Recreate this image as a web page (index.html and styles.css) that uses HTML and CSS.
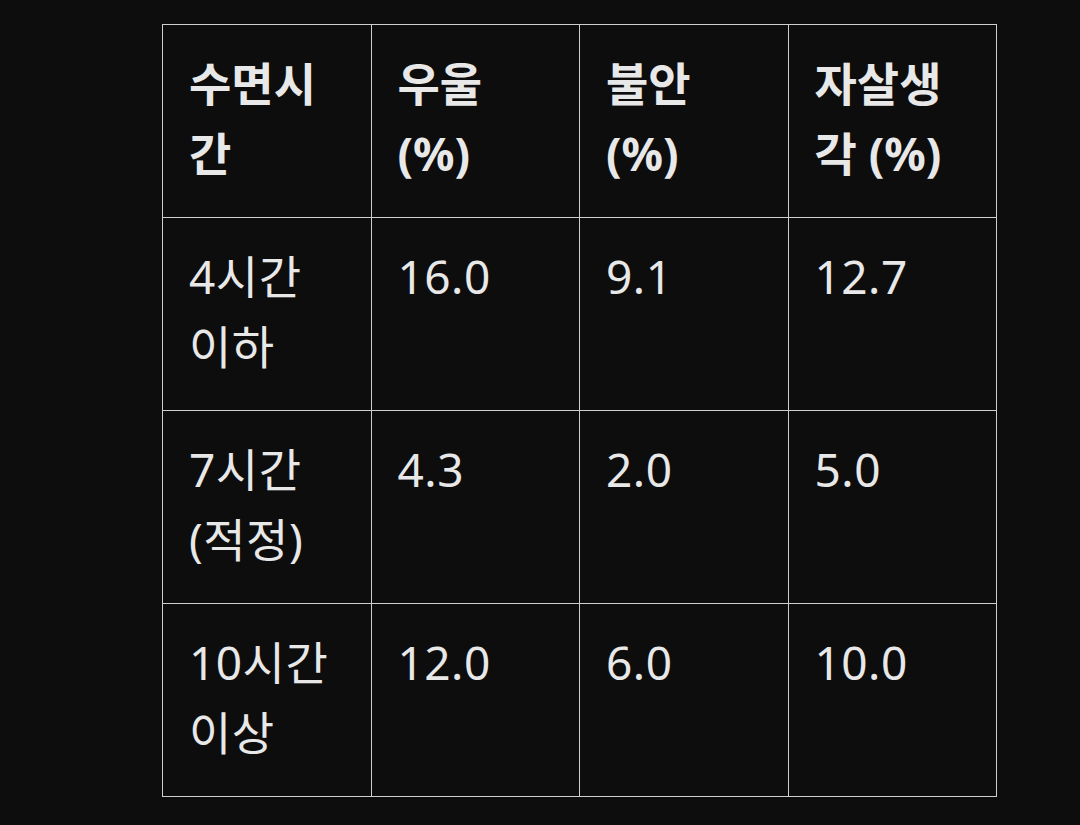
FILE: index.html
```html
<!DOCTYPE html>
<html lang="ko">
<head>
<meta charset="utf-8">
<link rel="stylesheet" href="styles.css">
</head>
<body>
<div class="page">
<table class="data">
  <thead>
    <tr><th>수면시간</th><th>우울 (%)</th><th>불안 (%)</th><th>자살생각 (%)</th></tr>
  </thead>
  <tbody>
    <tr><td>4시간 이하</td><td>16.0</td><td>9.1</td><td>12.7</td></tr>
    <tr><td>7시간 (적정)</td><td>4.3</td><td>2.0</td><td>5.0</td></tr>
    <tr><td>10시간 이상</td><td>12.0</td><td>6.0</td><td>10.0</td></tr>
  </tbody>
</table>
</div>
</body>
</html>
```
FILE: styles.css
```css
html, body {
  margin: 0;
  padding: 0;
  background: #0d0d0d;
}
.page {
  padding: 24px 0 0 162px;
}
.data {
  border-collapse: collapse;
  table-layout: fixed;
  width: 835px;
  font-family: "Noto Sans", "Noto Sans CJK KR", sans-serif;
  font-size: 46px;
  line-height: 70px;
  color: #e8e8e8;
}
.data th, .data td {
  border: 1px solid #cfcfcf;
  padding: 23px 26px 29px 26px;
  text-align: left;
  vertical-align: top;
  height: 140px;
  box-sizing: content-box;
}
.data th {
  font-weight: 700;
}
.data td {
  font-weight: 400;
  letter-spacing: 0.5px;
}
```
